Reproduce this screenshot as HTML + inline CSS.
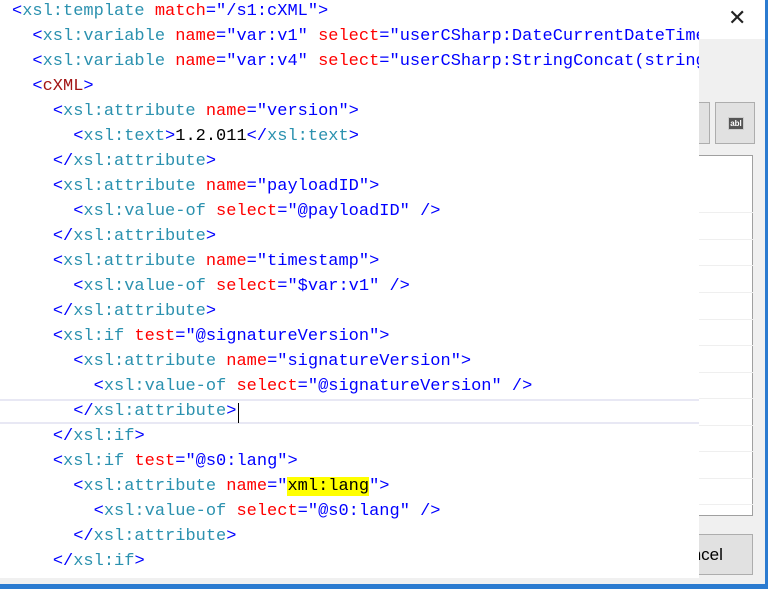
<!DOCTYPE html>
<html><head><meta charset="utf-8"><style>
html,body{margin:0;padding:0;}
body{width:768px;height:589px;position:relative;overflow:hidden;background:#fff;}
.dlg{position:absolute;left:0;top:0;width:768px;height:589px;background:#f0f0f0;}
.top{position:absolute;left:0;top:0;width:765px;height:39px;background:#fff;}
.rb{position:absolute;left:765px;top:0;width:3px;height:589px;background:#2b7bd0;}
.bb{position:absolute;left:0;top:584px;width:768px;height:5px;background:#2b7bd0;}
.x{position:absolute;left:728px;top:6px;font:22px "DejaVu Sans",sans-serif;color:#222;}
.btn{position:absolute;background:#e1e1e1;border:1px solid #adadad;box-sizing:border-box;}
.list{position:absolute;left:690px;top:155px;width:63px;height:361px;background:#fff;border:1px solid #a0a0a0;box-sizing:border-box;}
.row{position:absolute;left:0;width:62px;height:1px;background:#efefef;}
.code{position:absolute;left:0;top:0;width:699px;height:578px;background:#fff;overflow:hidden;}
pre{margin:0;position:absolute;left:12px;top:-1px;font:17px/25px "Liberation Mono",monospace;color:#000;white-space:pre;}
.b{color:#0000ff}.t{color:#2b91af}.r{color:#ff0000}.d{color:#a31515}
.hl{position:absolute;left:0;top:399px;width:699px;height:25px;border-top:2px solid #e8e8f4;border-bottom:2px solid #e8e8f4;box-sizing:border-box;}
.cur{position:absolute;left:238px;top:403px;width:1px;height:20px;background:#000;}
.y{background:#ffff00;}
</style></head><body>
<div class="dlg">
<div class="top"></div>
<div class="x">✕</div>
<div class="btn" style="left:680px;top:102px;width:30px;height:42px"></div>
<div class="btn" style="left:715px;top:102px;width:40px;height:42px"><div style="position:absolute;left:12px;top:14px;width:14px;height:11px;background:#555;color:#fff;font:bold 8px/11px 'Liberation Sans',sans-serif;text-align:center;border:1px solid #ccc">abl</div></div>
<div class="list">
<div class="row" style="top:56px"></div><div class="row" style="top:83px"></div><div class="row" style="top:109px"></div><div class="row" style="top:136px"></div><div class="row" style="top:163px"></div><div class="row" style="top:189px"></div><div class="row" style="top:216px"></div><div class="row" style="top:242px"></div><div class="row" style="top:269px"></div><div class="row" style="top:295px"></div><div class="row" style="top:322px"></div><div class="row" style="top:348px"></div>
</div>
<div class="btn" style="left:660px;top:534px;width:93px;height:41px;font:17px/39px 'Liberation Sans',sans-serif;color:#000;padding-left:9px">Cancel</div>
<div class="rb"></div><div class="bb"></div>
</div>
<div class="code">
<div class="hl"></div><div class="cur"></div>
<pre><span class="b">&lt;</span><span class="t">xsl:template</span> <span class="r">match</span><span class="b">="/s1:cXML"&gt;</span>
  <span class="b">&lt;</span><span class="t">xsl:variable</span> <span class="r">name</span><span class="b">="var:v1"</span> <span class="r">select</span><span class="b">="userCSharp:DateCurrentDateTime()" /&gt;</span>
  <span class="b">&lt;</span><span class="t">xsl:variable</span> <span class="r">name</span><span class="b">="var:v4"</span> <span class="r">select</span><span class="b">="userCSharp:StringConcat(string(..))" /&gt;</span>
  <span class="b">&lt;</span><span class="d">cXML</span><span class="b">&gt;</span>
    <span class="b">&lt;</span><span class="t">xsl:attribute</span> <span class="r">name</span><span class="b">="version"&gt;</span>
      <span class="b">&lt;</span><span class="t">xsl:text</span><span class="b">&gt;</span>1.2.011<span class="b">&lt;/</span><span class="t">xsl:text</span><span class="b">&gt;</span>
    <span class="b">&lt;/</span><span class="t">xsl:attribute</span><span class="b">&gt;</span>
    <span class="b">&lt;</span><span class="t">xsl:attribute</span> <span class="r">name</span><span class="b">="payloadID"&gt;</span>
      <span class="b">&lt;</span><span class="t">xsl:value-of</span> <span class="r">select</span><span class="b">="@payloadID" /&gt;</span>
    <span class="b">&lt;/</span><span class="t">xsl:attribute</span><span class="b">&gt;</span>
    <span class="b">&lt;</span><span class="t">xsl:attribute</span> <span class="r">name</span><span class="b">="timestamp"&gt;</span>
      <span class="b">&lt;</span><span class="t">xsl:value-of</span> <span class="r">select</span><span class="b">="$var:v1" /&gt;</span>
    <span class="b">&lt;/</span><span class="t">xsl:attribute</span><span class="b">&gt;</span>
    <span class="b">&lt;</span><span class="t">xsl:if</span> <span class="r">test</span><span class="b">="@signatureVersion"&gt;</span>
      <span class="b">&lt;</span><span class="t">xsl:attribute</span> <span class="r">name</span><span class="b">="signatureVersion"&gt;</span>
        <span class="b">&lt;</span><span class="t">xsl:value-of</span> <span class="r">select</span><span class="b">="@signatureVersion" /&gt;</span>
      <span class="b">&lt;/</span><span class="t">xsl:attribute</span><span class="b">&gt;</span>
    <span class="b">&lt;/</span><span class="t">xsl:if</span><span class="b">&gt;</span>
    <span class="b">&lt;</span><span class="t">xsl:if</span> <span class="r">test</span><span class="b">="@s0:lang"&gt;</span>
      <span class="b">&lt;</span><span class="t">xsl:attribute</span> <span class="r">name</span><span class="b">="</span><span class="y">xml:lang</span><span class="b">"&gt;</span>
        <span class="b">&lt;</span><span class="t">xsl:value-of</span> <span class="r">select</span><span class="b">="@s0:lang" /&gt;</span>
      <span class="b">&lt;/</span><span class="t">xsl:attribute</span><span class="b">&gt;</span>
    <span class="b">&lt;/</span><span class="t">xsl:if</span><span class="b">&gt;</span></pre>
</div>
</body></html>
